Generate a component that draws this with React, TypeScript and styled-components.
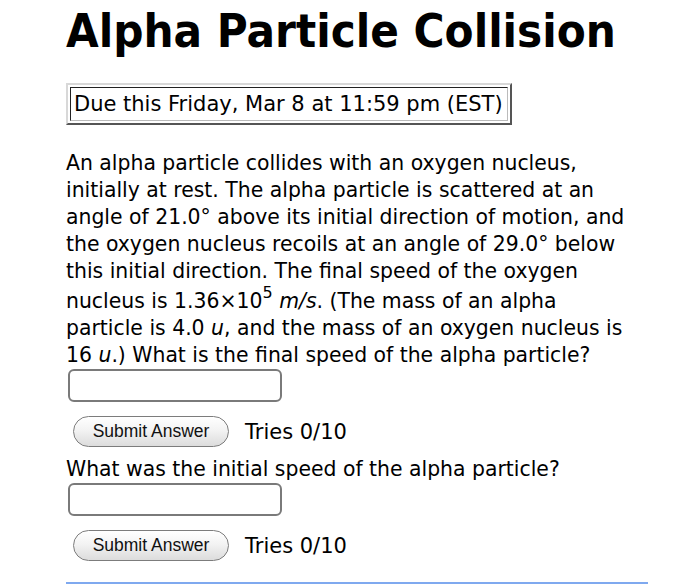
import React from "react";
import styled, { createGlobalStyle } from "styled-components";

const Global = createGlobalStyle`
  html, body { margin: 0; padding: 0; background: #fff; }
  body { font-family: "DejaVu Sans", Verdana, sans-serif; color: #000; }
`;

const Page = styled.div`
  padding: 0 0 0 66px;
  width: 582px;
`;

const Title = styled.h1`
  margin: 0;
  padding-top: 3px;
  font-family: "DejaVu Sans Condensed", "DejaVu Sans", Verdana, sans-serif;
  font-weight: bold;
  font-size: 47px;
  line-height: 56px;
  white-space: nowrap;
`;

const DueOuter = styled.div`
  display: inline-block;
  margin-top: 24px;
  padding: 2px;
  border: 2px solid;
  border-color: #d8d8d8 #555 #555 #d8d8d8;
`;

const DueInner = styled.div`
  border: 1px solid;
  border-color: #222 #bbb #bbb #222;
  padding: 2px 4px 2px 3px;
  font-size: 21px;
  line-height: 28px;
  white-space: nowrap;
`;

const Paragraph = styled.p`
  margin: 25px 0 0 0;
  font-size: 20.4px;
  line-height: 27px;
  width: 566px;
`;

const Sup = styled.sup`
  font-size: 16px;
  line-height: 1;
  vertical-align: 10px;
`;

const AnswerInput = styled.input`
  display: block;
  box-sizing: border-box;
  width: 214px;
  height: 33px;
  margin: 0 0 0 2px;
  border: 2px solid #7a7a7a;
  border-radius: 6px;
  background: #fff;
  outline: none;
`;

const SubmitRow = styled.div`
  display: flex;
  align-items: center;
  gap: 16px;
  margin: 14px 0 0 7px;
`;

const SubmitButton = styled.button`
  box-sizing: border-box;
  width: 156px;
  height: 31px;
  border: 1px solid #7c7c7c;
  border-radius: 16px;
  background: linear-gradient(#ffffff 0%, #f3f3f3 45%, #dcdcdc 100%);
  font-family: "Liberation Sans", Arial, sans-serif;
  font-size: 17.5px;
  color: #111;
  padding: 0;
`;

const Tries = styled.span`
  font-size: 21px;
`;

const Question = styled.p`
  margin: 9px 0 0 0;
  font-size: 20.4px;
  line-height: 27px;
`;

const Rule = styled.div`
  margin-top: 21px;
  width: 582px;
  height: 2px;
  background: #7fa9ef;
`;

export default function App() {
  return (
    <>
      <Global />
      <Page>
        <Title>Alpha Particle Collision</Title>
        <DueOuter>
          <DueInner>Due this Friday, Mar 8 at 11:59 pm (EST)</DueInner>
        </DueOuter>
        <Paragraph>
          An alpha particle collides with an oxygen nucleus, initially at rest. The alpha
          particle is scattered at an angle of 21.0° above its initial direction of motion,
          and the oxygen nucleus recoils at an angle of 29.0° below this initial direction.
          The final speed of the oxygen nucleus is 1.36×10<Sup>5</Sup> <i>m/s</i>. (The mass
          of an alpha particle is 4.0 <i>u</i>, and the mass of an oxygen nucleus is 16{" "}
          <i>u</i>.) What is the final speed of the alpha particle?
        </Paragraph>
        <AnswerInput />
        <SubmitRow>
          <SubmitButton>Submit Answer</SubmitButton>
          <Tries>Tries 0/10</Tries>
        </SubmitRow>
        <Question>What was the initial speed of the alpha particle?</Question>
        <AnswerInput />
        <SubmitRow>
          <SubmitButton>Submit Answer</SubmitButton>
          <Tries>Tries 0/10</Tries>
        </SubmitRow>
        <Rule />
      </Page>
    </>
  );
}
